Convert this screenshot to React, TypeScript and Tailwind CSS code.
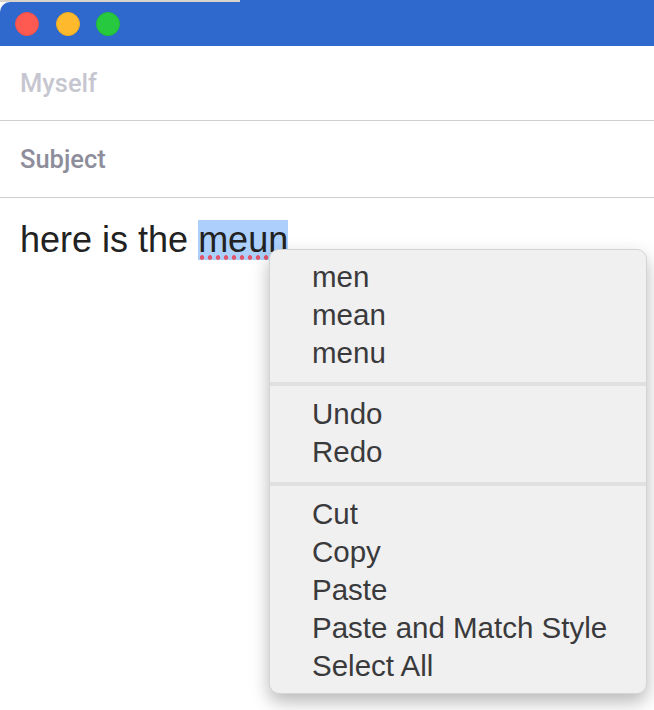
import React from "react";

const groups = [
  ["men", "mean", "menu"],
  ["Undo", "Redo"],
  ["Cut", "Copy", "Paste", "Paste and Match Style", "Select All"],
];

const ContextMenu = () => (
  <div className="absolute left-[269px] top-[249px] w-[378px] h-[445px] py-2 bg-[#f0f0f0] border border-[#d4d4d4] rounded-[10px] shadow-[0_8px_18px_rgba(0,0,0,0.28)] font-['Liberation_Sans',sans-serif] text-[29.5px] text-[#3a3a3c]">
    {groups.map((items, i) => (
      <div key={i}>
        {i > 0 && <div className={`h-1 mb-[9px] bg-[#e0e0e0] ${i === 1 ? "mt-[10px]" : "mt-[11px]"}`} />}
        {items.map((item) => (
          <div key={item} className="h-[38px] leading-[38px] pl-[42px] whitespace-nowrap">
            {item}
          </div>
        ))}
      </div>
    ))}
  </div>
);

export default function App() {
  return (
    <div className="relative w-[654px] h-[710px] overflow-hidden bg-white">
      <div className="flex h-[2px] bg-[#2f69cd]">
        <div className="w-[240px] bg-[#d8d4cc]" />
      </div>
      <div className="flex items-center gap-[17px] h-[44px] pl-[15px] bg-[#2f69cd] rounded-tl-[10px]">
        <div className="w-6 h-6 rounded-full bg-[#ff5a52] border border-[#f0504a]" />
        <div className="w-6 h-6 rounded-full bg-[#ffb92c] border border-[#f2ac20]" />
        <div className="w-6 h-6 -ml-px rounded-full bg-[#27c93f] border border-[#20bd36]" />
      </div>
      <div className="flex items-center h-[75px] pl-5 border-b border-[#cfcfcf] font-['Roboto',sans-serif] font-medium text-[25.5px] text-[#c6c6d0]">
        Myself
      </div>
      <div className="flex items-center h-[77px] pl-5 border-b border-[#cfcfcf] font-['Roboto',sans-serif] font-medium text-[25.5px] text-[#8d8d9b]">
        Subject
      </div>
      <div className="pl-5 pt-[22px] font-['Liberation_Sans',sans-serif] text-[36px] leading-[40px] text-[#222222]">
        here is the{" "}
        <span className="relative inline-block bg-[#acd0fb]">
          meun
          <span className="absolute left-0 right-0 top-[35px] h-[5px] bg-[radial-gradient(circle,#e0566a_2px,transparent_2.6px)] bg-[length:8px_5px]" />
        </span>
      </div>
      <ContextMenu />
    </div>
  );
}
